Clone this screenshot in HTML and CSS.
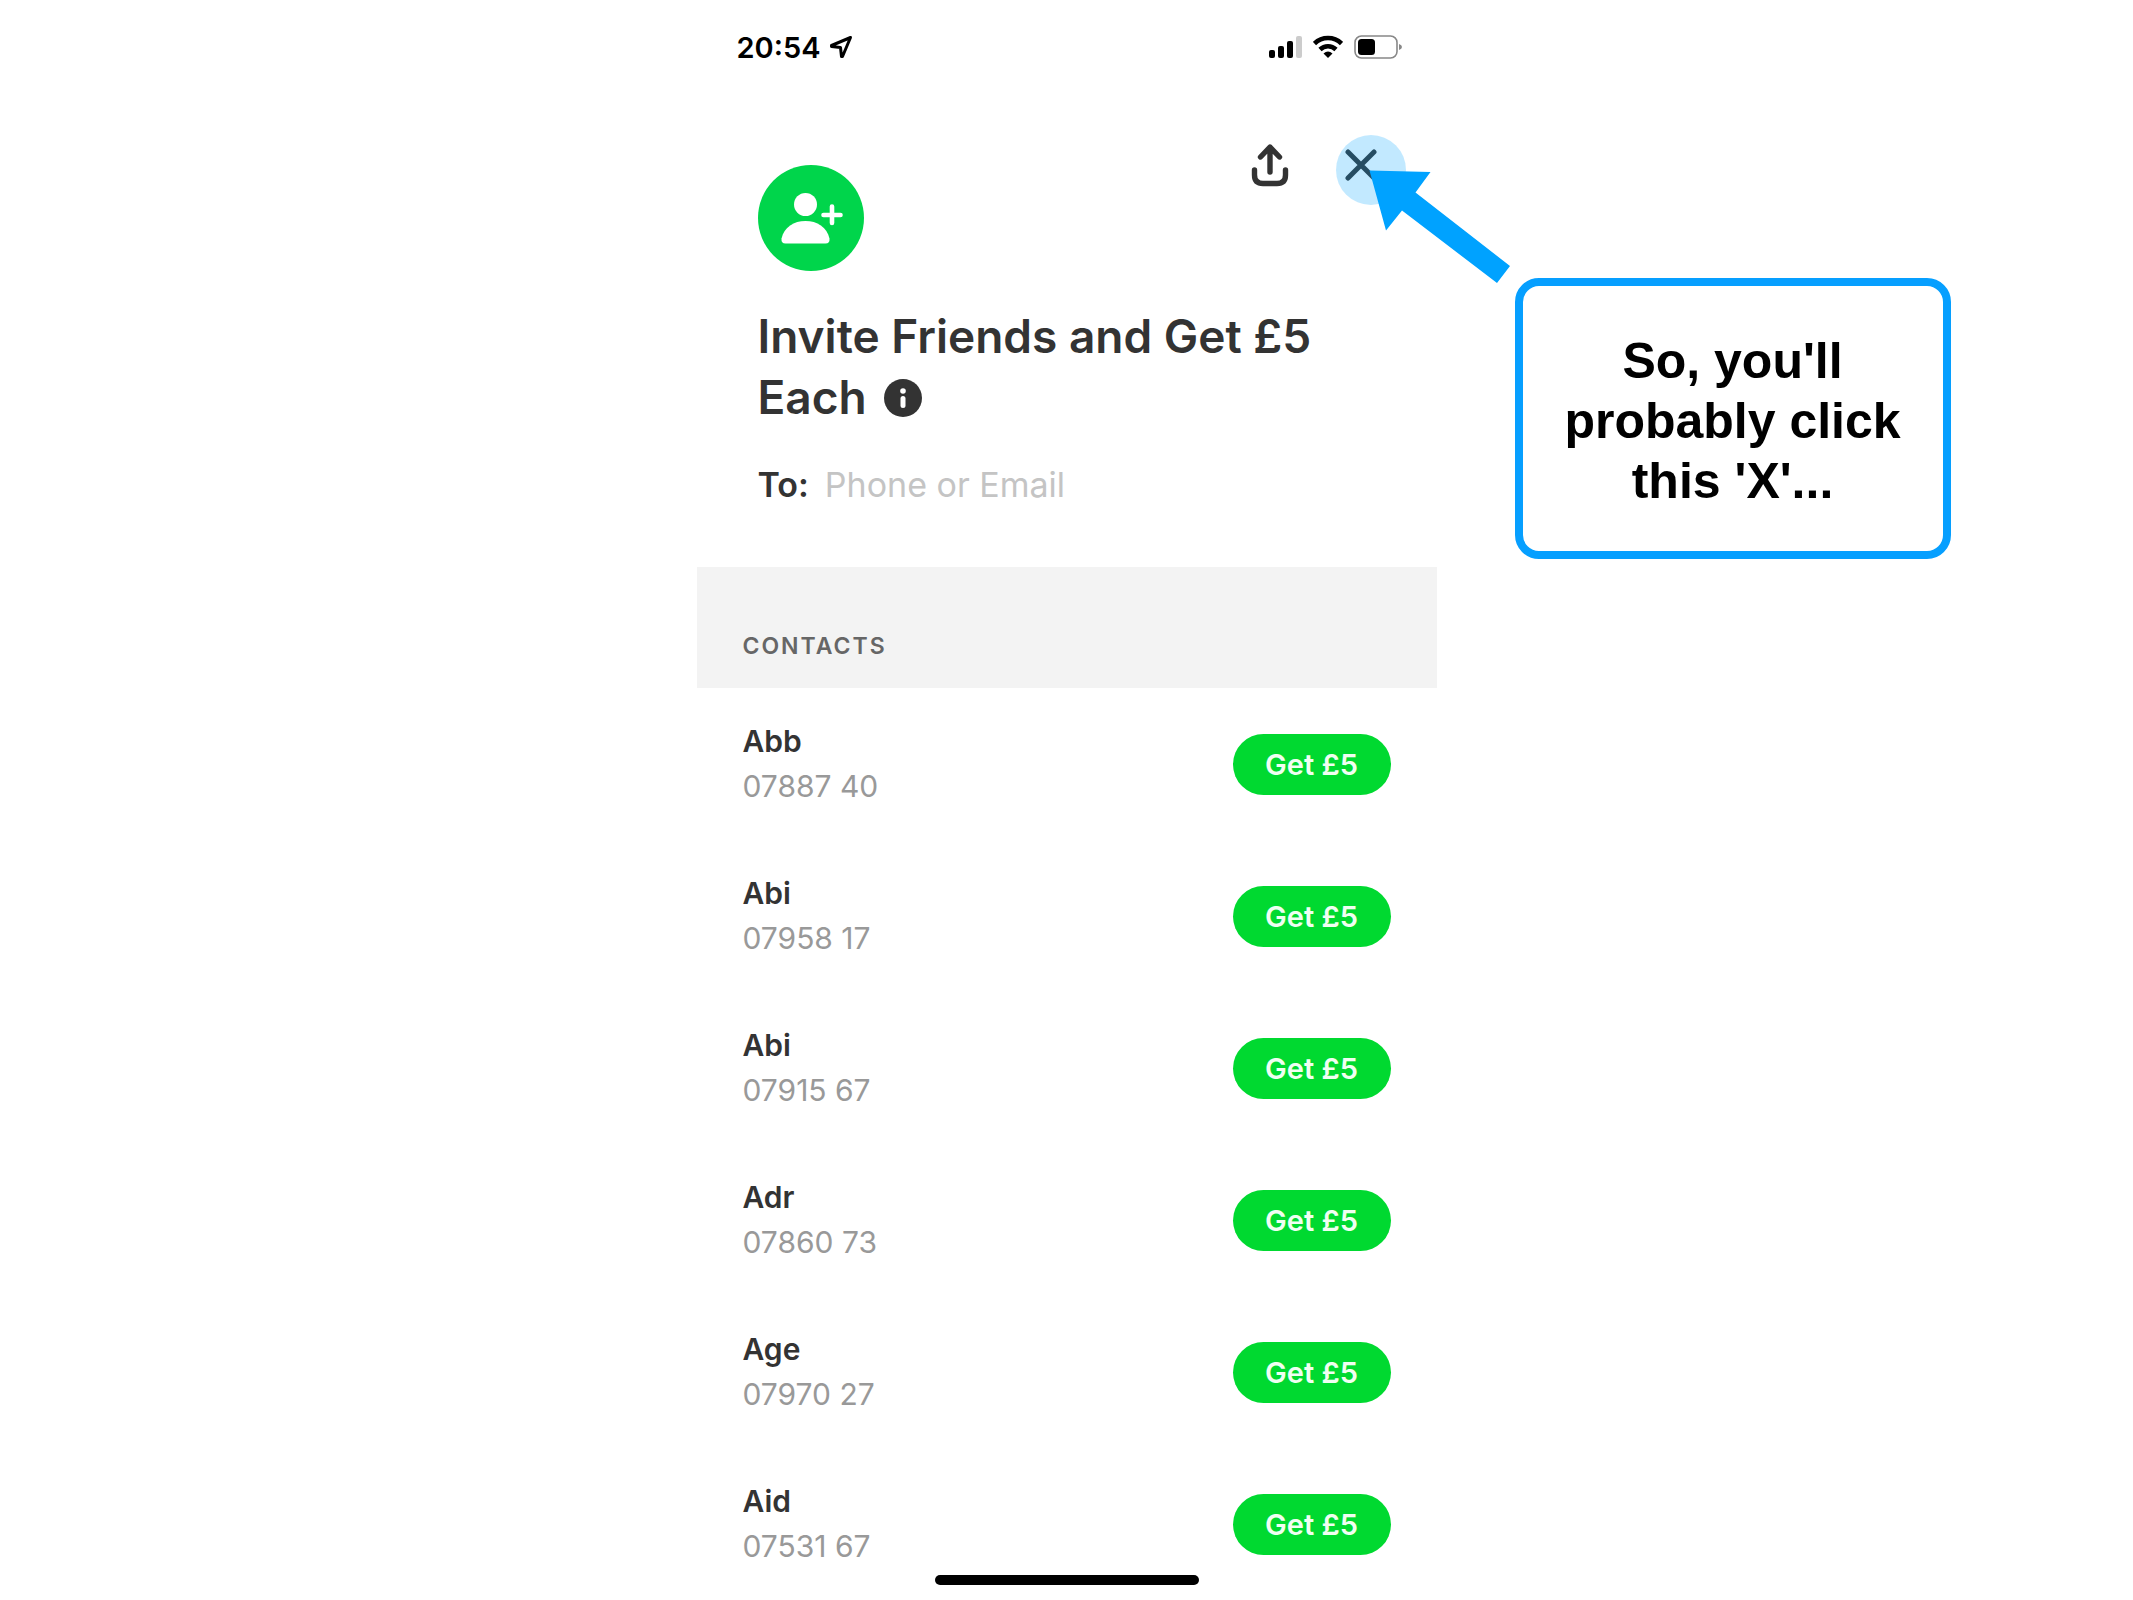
FILE: index.html
```html
<!DOCTYPE html>
<html lang="en">
<head>
<meta charset="utf-8">
<meta name="viewport" content="width=device-width, initial-scale=1">
<title>Invite Friends</title>
<link rel="stylesheet" href="styles.css">
</head>
<body>
<div class="stage">
  <main class="phone">
    <div class="status">
      <div class="status-time">
        <span>20:54</span>
        <svg width="24" height="24" viewBox="0 0 24 24" fill="none" stroke="#000" stroke-width="3" stroke-linejoin="round"><path d="M21.500 2.500 L2.500 10.500 L2.500 11.500 L11.500 12.500 L12.500 21.500 L13.500 21.500 Z"/></svg>
      </div>
      <div class="status-icons">
        <svg width="33" height="24" viewBox="0 0 33 24"><g fill="#000"><rect x="0" y="15" width="6" height="8" rx="2"/><rect x="9" y="11" width="6" height="12" rx="2"/><rect x="18" y="6" width="6" height="17" rx="2"/></g><rect x="27" y="1" width="6" height="22" rx="2" fill="#ccc"/></svg>
        <svg width="30" height="24" viewBox="0 0 30 24"><g fill="none" stroke="#000" stroke-width="4.600"><path d="M1.500 8.500 A19.500 19.500 0 0 1 28.500 8.500"/><path d="M7 14.500 A11.500 11.500 0 0 1 23 14.500"/></g><path d="M10.500 18.500 Q15 14.500 19.500 18.500 L15 23 Z"/></svg>
        <svg width="48" height="24" viewBox="0 0 48 24"><rect x="1" y="1" width="42" height="22" rx="6.500" fill="#fff" stroke="#888" stroke-width="1.600"/><rect x="4" y="4" width="17" height="16" rx="3.500"/><path d="M45 9 Q48 10 48 12 Q48 14 45 15 Z" fill="#888"/></svg>
      </div>
    </div>

    <header class="header">
      <div class="avatar">
        <svg width="106" height="106" viewBox="0 0 106 106" fill="#fff"><circle cx="47.500" cy="39.500" r="11.500"/><path d="M27.500 78.500 Q23 78.500 23.500 73.500 C26 62 36 56 47.500 56 C59 56 69 62 71.500 73.500 Q72 78.500 67.500 78.500 Z"/><path d="M74 41.500 V58 M65.500 50 H82.500" fill="none" stroke="#fff" stroke-width="4.600" stroke-linecap="round"/></svg>
      </div>
      <div class="actions">
        <button class="icon-button" type="button" aria-label="Share">
          <svg width="38" height="44" viewBox="0 0 38 44" fill="none" stroke="#333" stroke-width="5.400" stroke-linecap="round" stroke-linejoin="round"><path d="M19 29 V4.500 M9.500 14 L19 4 L28.500 14 M3.500 27 V32 Q3.500 40.500 12 40.500 H26 Q34.500 40.500 34.500 32 V27"/></svg>
        </button>
        <div class="close">
          <button class="icon-button" type="button" aria-label="Close">
            <svg width="32" height="32" viewBox="0 0 32 32" fill="none" stroke="#333" stroke-width="5" stroke-linecap="round"><path d="M3 3 L29 29 M29 3 L3 29"/></svg>
          </button>
          <span class="tap-spot"></span>
          <svg class="arrow" width="142" height="114" viewBox="0 0 142 114"><path fill="#00a2ff" d="M0.500 0.500 L61.500 2 L46.500 22.500 L141 96 L128 113 L33 40.500 L17 60.500 Z"/></svg>
        </div>
      </div>
    </header>

    <section class="invite">
      <h1 class="title">Invite Friends and Get £5 Each
        <button class="info" type="button" aria-label="More information">
          <svg width="38" height="38" viewBox="0 0 38 38"><circle cx="19" cy="19" r="19" fill="#333"/><circle cx="19" cy="12" r="2.800" fill="#fff"/><path d="M19 19.500 V26.500" stroke="#fff" stroke-width="5" stroke-linecap="round"/></svg>
        </button>
      </h1>
      <div class="recipient">
        <label class="recipient-label" for="to">To:</label>
        <input class="recipient-input" id="to" type="text" placeholder="Phone or Email">
      </div>
    </section>

    <h2 class="section-title">CONTACTS</h2>
    <ul class="contacts">
      <li class="contact"><div><p class="name">Abb</p><p class="number">07887 40</p></div><button class="get" type="button">Get £5</button></li>
      <li class="contact"><div><p class="name">Abi</p><p class="number">07958 17</p></div><button class="get" type="button">Get £5</button></li>
      <li class="contact"><div><p class="name">Abi</p><p class="number">07915 67</p></div><button class="get" type="button">Get £5</button></li>
      <li class="contact"><div><p class="name">Adr</p><p class="number">07860 73</p></div><button class="get" type="button">Get £5</button></li>
      <li class="contact"><div><p class="name">Age</p><p class="number">07970 27</p></div><button class="get" type="button">Get £5</button></li>
      <li class="contact"><div><p class="name">Aid</p><p class="number">07531 67</p></div><button class="get" type="button">Get £5</button></li>
    </ul>
    <div class="home-bar"></div>
  </main>

  <aside class="note">So, you'll probably click this 'X'...</aside>
</div>
</body>
</html>
```

FILE: styles.css
```css
* {
  box-sizing: border-box;
}

body {
  margin: 0;
  background: #fff;
  color: #333;
  font-family: Inter, Roboto, sans-serif;
}

h1, h2, p, ul {
  margin: 0;
  padding: 0;
}

button {
  padding: 0;
  border: 0;
  background: none;
  color: inherit;
  font: inherit;
  cursor: pointer;
}

svg {
  display: block;
}

.stage {
  display: grid;
  grid-template-columns: 1fr minmax(0, 740px) 1fr;
  align-items: start;
}

.phone {
  grid-column: 2;
  position: relative;
}

.status {
  display: flex;
  justify-content: space-between;
  align-items: center;
  height: 94px;
  padding: 0 35px 0 40px;
}

.status-time {
  display: flex;
  align-items: center;
  gap: 8px;
  color: #000;
  font-size: 29px;
  font-weight: 600;
}

.status-icons {
  display: flex;
  align-items: center;
  gap: 11px;
}

.header {
  display: flex;
  justify-content: space-between;
  align-items: flex-start;
  padding: 71px 60px 0 61px;
}

.avatar {
  border-radius: 50%;
  background: #00d54b;
}

.actions {
  display: flex;
  align-items: center;
  gap: 56px;
  height: 0;
}

.icon-button {
  display: block;
}

.close {
  position: relative;
}

.tap-spot {
  position: absolute;
  top: -14px;
  left: -9px;
  width: 70px;
  height: 70px;
  border-radius: 50%;
  background: rgba(0, 162, 255, 0.24);
  pointer-events: none;
}

.arrow {
  position: absolute;
  top: 21px;
  left: 24px;
  z-index: 1;
  pointer-events: none;
}

.invite {
  padding: 35px 61px 58px;
}

.title {
  font-size: 46px;
  font-weight: 600;
  line-height: 61px;
}

.info {
  margin-left: 6px;
  vertical-align: -3px;
}

.recipient {
  display: flex;
  align-items: center;
  gap: 16px;
  margin-top: 33px;
  font-size: 34px;
  line-height: 48px;
}

.recipient-label {
  font-weight: 600;
}

.recipient-input {
  flex: 1;
  min-width: 0;
  height: 48px;
  padding: 0;
  border: 0;
  outline: 0;
  background: none;
  color: inherit;
  font: inherit;
}

.recipient-input::placeholder {
  color: #c4c4c4;
  opacity: 1;
}

.section-title {
  padding: 65px 46px 28px;
  background: #f3f3f3;
  color: #666;
  font-size: 23px;
  font-weight: 600;
  line-height: 28px;
  letter-spacing: 2px;
}

.contacts {
  list-style: none;
}

.contact {
  display: flex;
  justify-content: space-between;
  align-items: center;
  height: 152px;
  padding: 0 46px;
}

.name {
  font-size: 30px;
  font-weight: 600;
  line-height: 45px;
}

.number {
  color: #999;
  font-size: 30px;
  line-height: 45px;
}

.get {
  width: 158px;
  height: 61px;
  border-radius: 31px;
  background: #00d930;
  color: #f0fff2;
  font-size: 29px;
  font-weight: 600;
}

.home-bar {
  position: absolute;
  bottom: 15px;
  left: 50%;
  width: 264px;
  height: 10px;
  margin-left: -132px;
  border-radius: 5px;
  background: #000;
}

.note {
  width: 436px;
  margin: 278px 0 0 78px;
  padding: 45px 24px 40px;
  border: 8px solid #069fff;
  border-radius: 24px;
  color: #000;
  font-family: "Liberation Sans", Arial, sans-serif;
  font-size: 50px;
  font-weight: 700;
  line-height: 60px;
  text-align: center;
}
```
